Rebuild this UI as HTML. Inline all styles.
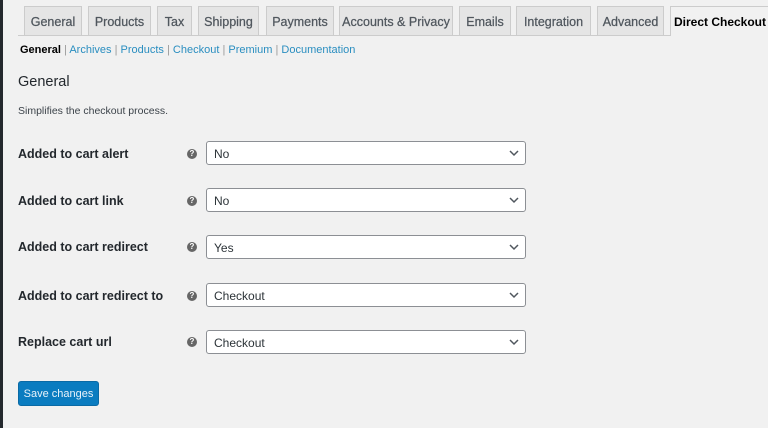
<!DOCTYPE html>
<html><head><style>
*{margin:0;padding:0;box-sizing:border-box}
body{width:768px;height:428px;background:#f1f1f1;font-family:"Liberation Sans",sans-serif;color:#23282d;position:relative;overflow:hidden}
.lb{position:absolute;left:0;top:0;width:3px;height:428px;background:#23282d}
.line{position:absolute;left:18px;right:0;top:35px;height:1px;background:#ccc}
.tab{position:absolute;top:6px;height:29px;background:#e5e5e5;border:1px solid #ccc;border-bottom:none;font-size:12.5px;color:#50575e;text-align:center;line-height:30px;white-space:nowrap;-webkit-text-stroke:0.25px #50575e}
.tab.a{background:#f1f1f1;color:#000;height:30px;font-weight:bold;font-size:12px;-webkit-text-stroke:0}
.sub{position:absolute;left:20px;top:44px;font-size:11px;color:#999}
.sub a{color:#2a8ec0;text-decoration:none}
.sub b{color:#000}
h2{position:absolute;left:18px;top:74px;font-size:14.5px;font-weight:normal;color:#23282d}
.desc{position:absolute;left:18px;top:105px;font-size:10.5px;color:#3c434a}
.lbl{position:absolute;left:18px;font-size:12.5px;font-weight:bold;color:#23282d;margin-top:1px}
.q{position:absolute;left:187px;width:10px;height:10px;border-radius:50%;background:#666;color:#fff;font-size:8px;font-weight:bold;text-align:center;line-height:10px}
.sel{position:absolute;left:206px;width:320px;height:24px;background:#fff;border:1px solid #8c8f94;border-radius:3px;font-size:12px;color:#2c3338;line-height:24px;padding-left:7px}
.sel svg{position:absolute;right:6px;top:8px}
.btn{position:absolute;left:18px;top:381px;width:81px;height:25px;background:#0a7cc0;border:1px solid #0a6aa5;border-radius:3px;color:#e8f2fa;font-size:11px;line-height:24px;text-align:center}
</style></head><body>
<div class="lb"></div>
<div class="line"></div>
<div class="tab" style="left:24px;width:58px">General</div>
<div class="tab" style="left:88px;width:63px">Products</div>
<div class="tab" style="left:157px;width:35px">Tax</div>
<div class="tab" style="left:198px;width:61px">Shipping</div>
<div class="tab" style="left:266px;width:68px">Payments</div>
<div class="tab" style="left:339px;width:114px">Accounts &amp; Privacy</div>
<div class="tab" style="left:459px;width:52px">Emails</div>
<div class="tab" style="left:516px;width:75px">Integration</div>
<div class="tab" style="left:597px;width:67px">Advanced</div>
<div class="tab a" style="left:670px;width:100px">Direct Checkout</div>
<div class="sub"><b>General</b> | <a>Archives</a> | <a>Products</a> | <a>Checkout</a> | <a>Premium</a> | <a>Documentation</a></div>
<h2>General</h2>
<div class="desc">Simplifies the checkout process.</div>

<div class="lbl" style="top:146px">Added to cart alert</div><div class="q" style="top:149px">?</div>
<div class="sel" style="top:141px">No<svg width="10" height="7" viewBox="0 0 10 7"><path d="M1 1l4 4 4-4" stroke="#50575e" stroke-width="1.5" fill="none"/></svg></div>

<div class="lbl" style="top:193px">Added to cart link</div><div class="q" style="top:196px">?</div>
<div class="sel" style="top:188px">No<svg width="10" height="7" viewBox="0 0 10 7"><path d="M1 1l4 4 4-4" stroke="#50575e" stroke-width="1.5" fill="none"/></svg></div>

<div class="lbl" style="top:239px">Added to cart redirect</div><div class="q" style="top:242px">?</div>
<div class="sel" style="top:235px">Yes<svg width="10" height="7" viewBox="0 0 10 7"><path d="M1 1l4 4 4-4" stroke="#50575e" stroke-width="1.5" fill="none"/></svg></div>

<div class="lbl" style="top:288px">Added to cart redirect to</div><div class="q" style="top:291px">?</div>
<div class="sel" style="top:283px">Checkout<svg width="10" height="7" viewBox="0 0 10 7"><path d="M1 1l4 4 4-4" stroke="#50575e" stroke-width="1.5" fill="none"/></svg></div>

<div class="lbl" style="top:334px">Replace cart url</div><div class="q" style="top:337px">?</div>
<div class="sel" style="top:330px">Checkout<svg width="10" height="7" viewBox="0 0 10 7"><path d="M1 1l4 4 4-4" stroke="#50575e" stroke-width="1.5" fill="none"/></svg></div>

<div class="btn">Save changes</div>
</body></html>
